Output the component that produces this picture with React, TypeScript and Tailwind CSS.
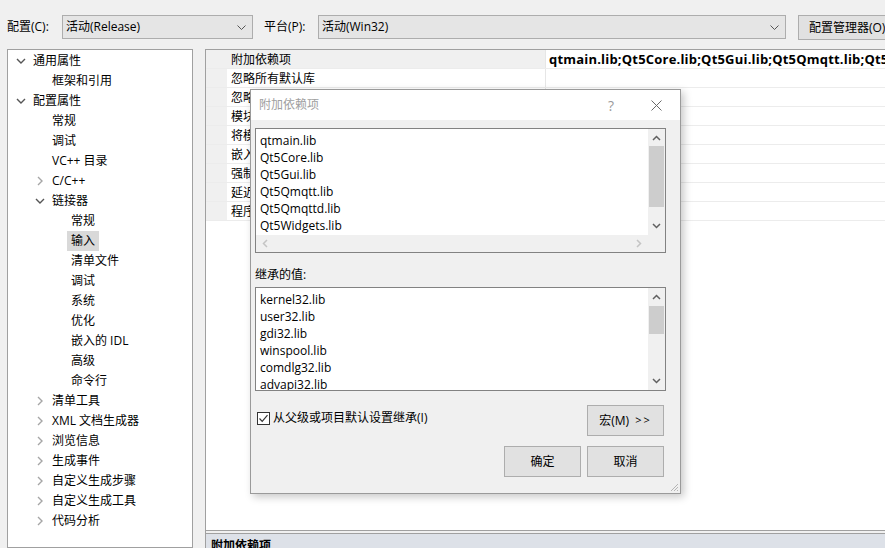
import React from "react";

type TreeItem = {
  label: string;
  level: 0 | 1 | 2;
  chevron?: "open" | "closed";
  selected?: boolean;
};

const treeItems: TreeItem[] = [
  { label: "通用属性", level: 0, chevron: "open" },
  { label: "框架和引用", level: 1 },
  { label: "配置属性", level: 0, chevron: "open" },
  { label: "常规", level: 1 },
  { label: "调试", level: 1 },
  { label: "VC++ 目录", level: 1 },
  { label: "C/C++", level: 1, chevron: "closed" },
  { label: "链接器", level: 1, chevron: "open" },
  { label: "常规", level: 2 },
  { label: "输入", level: 2, selected: true },
  { label: "清单文件", level: 2 },
  { label: "调试", level: 2 },
  { label: "系统", level: 2 },
  { label: "优化", level: 2 },
  { label: "嵌入的 IDL", level: 2 },
  { label: "高级", level: 2 },
  { label: "命令行", level: 2 },
  { label: "清单工具", level: 1, chevron: "closed" },
  { label: "XML 文档生成器", level: 1, chevron: "closed" },
  { label: "浏览信息", level: 1, chevron: "closed" },
  { label: "生成事件", level: 1, chevron: "closed" },
  { label: "自定义生成步骤", level: 1, chevron: "closed" },
  { label: "自定义生成工具", level: 1, chevron: "closed" },
  { label: "代码分析", level: 1, chevron: "closed" },
];

const props = [
  "附加依赖项",
  "忽略所有默认库",
  "忽略特定默认库",
  "模块定义文件",
  "将模块添加到程序集",
  "嵌入托管资源文件",
  "强制符号引用",
  "延迟加载的 DLL",
  "程序集链接资源",
];

const deps = ["qtmain.lib", "Qt5Core.lib", "Qt5Gui.lib", "Qt5Qmqtt.lib", "Qt5Qmqttd.lib", "Qt5Widgets.lib"];
const inherited = ["kernel32.lib", "user32.lib", "gdi32.lib", "winspool.lib", "comdlg32.lib", "advapi32.lib"];

const indent = ["pl-[4px]", "pl-[23px]", "pl-[42px]"];

function ChevronDown({ color = "#555" }: { color?: string }) {
  return (
    <svg width="10" height="6" viewBox="0 0 10 6">
      <path d="M1 1 L5 5 L9 1" fill="none" stroke={color} strokeWidth="1.4" />
    </svg>
  );
}

function ChevronRight({ color = "#a6a6a6" }: { color?: string }) {
  return (
    <svg width="6" height="10" viewBox="0 0 6 10">
      <path d="M1 1 L5 5 L1 9" fill="none" stroke={color} strokeWidth="1.4" />
    </svg>
  );
}

function ChevronUp({ color = "#606060" }: { color?: string }) {
  return (
    <svg width="9" height="6" viewBox="0 0 9 6">
      <path d="M1 5 L4.5 1.5 L8 5" fill="none" stroke={color} strokeWidth="1.5" />
    </svg>
  );
}

function ChevronLeft({ color = "#c4c4c4" }: { color?: string }) {
  return (
    <svg width="6" height="9" viewBox="0 0 6 9">
      <path d="M5 1 L1.5 4.5 L5 8" fill="none" stroke={color} strokeWidth="1.5" />
    </svg>
  );
}

function Combo({ text, width }: { text: string; width: string }) {
  return (
    <div className={`${width} shrink-0 h-[24px] flex items-center justify-between bg-[#e5e5e5] border border-[#adadad] pl-[3px] pr-[6px]`}>
      <span>{text}</span>
      <svg width="9" height="5" viewBox="0 0 9 5">
        <path d="M0.5 0.5 L4.5 4.5 L8.5 0.5" fill="none" stroke="#555" strokeWidth="1" />
      </svg>
    </div>
  );
}

function Tree() {
  return (
    <div className="w-[186px] shrink-0 h-full bg-white border border-[#a0a0a0] pt-[1px] flex flex-col whitespace-nowrap">
      {treeItems.map((item, i) => (
        <div key={i} className={`h-[20px] shrink-0 flex items-center ${indent[item.level]}`}>
          <div className="w-[17px] shrink-0 flex justify-center">
            {item.chevron === "open" && <ChevronDown />}
            {item.chevron === "closed" && <ChevronRight />}
          </div>
          <span className={item.selected ? "px-[4px] h-[20px] leading-[20px] bg-[#d9d9d9]" : "ml-[4px]"}>
            {item.label}
          </span>
        </div>
      ))}
    </div>
  );
}

function PropertyGrid() {
  return (
    <div className="flex-1 min-w-0 h-full border-l border-t border-[#a0a0a0] bg-white flex flex-col">
      <div className="flex-1 flex flex-col">
        {props.map((name, i) => (
          <div key={i} className="h-[19px] flex border-b border-[#ececec]">
            <div className="w-[21px] shrink-0 bg-[#f0f0f0]" />
            <div className={`w-[318px] shrink-0 pl-[4px] leading-[20px] whitespace-nowrap overflow-hidden ${i === 0 ? "bg-[#f0f0f0]" : "bg-white"}`}>
              {name}
            </div>
            <div className="flex-1 min-w-0 border-l border-[#e6e6e6] pl-[3px] leading-[19px] text-[13px] tracking-[0.2px] font-bold whitespace-nowrap overflow-hidden">
              {i === 0 ? "qtmain.lib;Qt5Core.lib;Qt5Gui.lib;Qt5Qmqtt.lib;Qt5Qmqttd.lib;Qt5Widgets.lib;%(AdditionalDependencies)" : ""}
            </div>
          </div>
        ))}
      </div>
      <div className="h-[4px] border-t border-b border-[#a0a0a0] bg-[#f0f0f0]" />
      <div className="h-[14px] bg-[#dde1e8] pl-[5px] font-bold leading-[24px] overflow-hidden">附加依赖项</div>
    </div>
  );
}

function VScroll({ thumbTop, thumbH }: { thumbTop: string; thumbH: string }) {
  return (
    <div className="w-[17px] shrink-0 h-full bg-[#f0f0f0] flex flex-col items-center">
      <div className="h-[17px] flex items-center justify-center">
        <ChevronUp />
      </div>
      <div className="flex-1 w-full flex flex-col">
        <div className={thumbTop} />
        <div className={`${thumbH} w-[15px] mx-auto bg-[#cdcdcd]`} />
      </div>
      <div className="h-[17px] flex items-center justify-center rotate-180">
        <ChevronUp />
      </div>
    </div>
  );
}

function ListBox({ items, height, hscroll, thumbTop, thumbH }: { items: string[]; height: string; hscroll?: boolean; thumbTop: string; thumbH: string }) {
  return (
    <div className={`w-[411px] ${height} border border-[#828282] bg-white flex flex-col`}>
      <div className="flex-1 flex min-h-0">
        <div className="flex-1 pt-[3px] pl-[4px] overflow-hidden">
          {items.map((t) => (
            <div key={t} className="h-[17px] leading-[17px]">
              {t}
            </div>
          ))}
        </div>
        <VScroll thumbTop={thumbTop} thumbH={thumbH} />
      </div>
      {hscroll && (
        <div className="h-[17px] flex bg-[#f0f0f0]">
          <div className="flex-1 flex items-center justify-between px-[6px]">
            <ChevronLeft />
            <div className="rotate-180">
              <ChevronLeft />
            </div>
          </div>
          <div className="w-[17px]" />
        </div>
      )}
    </div>
  );
}

function Button({ children }: { children: React.ReactNode }) {
  return (
    <div className="w-[77px] h-[31px] shrink-0 bg-[#e1e1e1] border border-[#adadad] flex items-center justify-center">
      {children}
    </div>
  );
}

function Dialog() {
  return (
    <div className="absolute left-[250px] top-[89px] w-[431px] h-[405px] border border-[#9a9a9a] bg-[#f0f0f0] shadow-[3px_3px_8px_rgba(0,0,0,0.22)] flex flex-col">
      <div className="h-[30px] bg-white flex items-center pl-[8px] pr-[18px]">
        <span className="flex-1 text-[#a0a0a0]">附加依赖项</span>
        <span className="text-[#9a9a9a] text-[14px] mr-[37px]">?</span>
        <svg width="11" height="11" viewBox="0 0 11 11">
          <path d="M0.5 0.5 L10.5 10.5 M10.5 0.5 L0.5 10.5" stroke="#6a6a6a" strokeWidth="1" />
        </svg>
      </div>
      <div className="flex-1 flex flex-col pl-[4px] pt-[8px]">
        <ListBox items={deps} height="h-[125px]" hscroll thumbTop="h-[0px]" thumbH="h-[61px]" />
        <div className="mt-[14px] leading-[16px]">继承的值:</div>
        <div className="mt-[4px]">
          <ListBox items={inherited} height="h-[104px]" thumbTop="h-[1px]" thumbH="h-[28px]" />
        </div>
        <div className="mt-[14px] flex w-[409px] justify-between">
          <div className="flex items-center h-[26px] pl-[2px]">
            <div className="w-[13px] h-[13px] border border-[#333] bg-white flex items-center justify-center">
              <svg width="11" height="11" viewBox="0 0 11 11">
                <path d="M1.5 5.5 L4.2 8.3 L9.5 2.2" fill="none" stroke="#333" strokeWidth="1.2" />
              </svg>
            </div>
            <span className="ml-[3px]">从父级或项目默认设置继承(I)</span>
          </div>
          <Button>
            <span>宏(M)</span>
            <span className="ml-[6px] text-[11px] tracking-[2px]">&gt;&gt;</span>
          </Button>
        </div>
        <div className="mt-[10px] flex w-[409px] justify-end gap-[6px]">
          <Button>确定</Button>
          <Button>取消</Button>
        </div>
      </div>
      <svg className="absolute right-[1px] bottom-[1px]" width="10" height="10" viewBox="0 0 10 10">
        <path d="M9 2 L2 9 M9 5 L5 9 M9 8 L8 9" stroke="#b5b5b5" strokeWidth="1" />
      </svg>
    </div>
  );
}

export default function App() {
  return (
    <div className="relative w-[885px] h-[548px] overflow-hidden bg-[#f0f0f0] text-[12px] text-black font-['Open_Sans','Noto_Sans_CJK_SC',sans-serif]">
      <div className="h-[49px] pt-[15px] pl-[7px] flex items-start whitespace-nowrap">
        <div className="w-[55px] shrink-0 h-[24px] leading-[24px]">配置(C):</div>
        <Combo text="活动(Release)" width="w-[191px]" />
        <div className="ml-[11px] w-[54px] shrink-0 h-[24px] leading-[24px]">平台(P):</div>
        <Combo text="活动(Win32)" width="w-[468px]" />
        <div className="ml-[12px] w-[100px] h-[25px] shrink-0 bg-[#e1e1e1] border border-[#adadad] pl-[10px] leading-[23px]">
          配置管理器(O)
        </div>
      </div>
      <div className="h-[499px] flex pl-[7px]">
        <Tree />
        <div className="w-[12px] shrink-0" />
        <PropertyGrid />
      </div>
      <Dialog />
    </div>
  );
}
